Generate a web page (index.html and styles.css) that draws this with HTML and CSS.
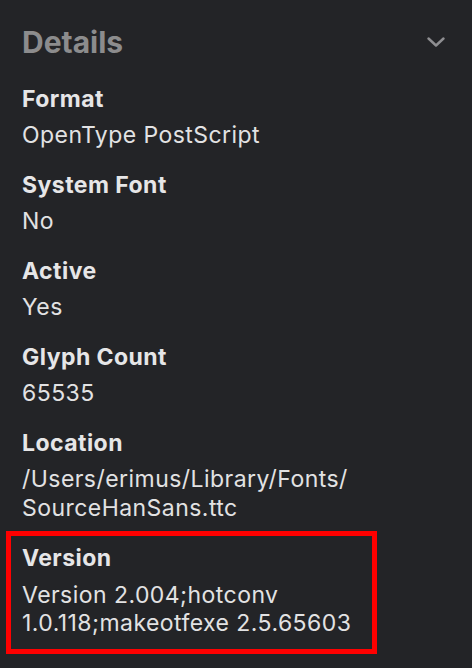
FILE: index.html
```html
<!DOCTYPE html>
<html lang="en">
<head>
<meta charset="utf-8">
<title>Details</title>
<link rel="stylesheet" href="styles.css">
</head>
<body>
<section class="panel">
  <header class="panel-header">
    <h2 class="panel-title">Details</h2>
    <svg class="chevron" width="18" height="10" viewBox="0 0 18 10" aria-hidden="true">
      <polyline points="1.5,1.5 9,8.5 16.5,1.5" fill="none" stroke="#8e8e91" stroke-width="2.4" stroke-linecap="round" stroke-linejoin="round"/>
    </svg>
  </header>
  <dl class="details">
    <div class="item">
      <dt class="label">Format</dt>
      <dd class="value">OpenType PostScript</dd>
    </div>
    <div class="item">
      <dt class="label">System Font</dt>
      <dd class="value">No</dd>
    </div>
    <div class="item">
      <dt class="label">Active</dt>
      <dd class="value">Yes</dd>
    </div>
    <div class="item">
      <dt class="label">Glyph Count</dt>
      <dd class="value">65535</dd>
    </div>
    <div class="item">
      <dt class="label">Location</dt>
      <dd class="value">/Users/erimus/Library/Fonts/<br>SourceHanSans.ttc</dd>
    </div>
    <div class="item item-highlight">
      <dt class="label">Version</dt>
      <dd class="value">Version 2.004;hotconv<br>1.0.118;makeotfexe 2.5.65603</dd>
    </div>
  </dl>
</section>
</body>
</html>
```

FILE: styles.css
```css
html, body {
  margin: 0;
  padding: 0;
  background: #232427;
}

body {
  width: 472px;
  height: 668px;
  overflow: hidden;
  font-family: Inter, "Liberation Sans", sans-serif;
  color: #e4e4e5;
}

.panel {
  padding: 24px 27px 0 0;
}

.panel-header {
  display: flex;
  align-items: center;
  justify-content: space-between;
  height: 36px;
  padding-left: 22px;
}

.panel-title {
  margin: 0;
  font-size: 30px;
  line-height: 36px;
  font-weight: 700;
  color: #8c8c8d;
}

.chevron {
  display: block;
}

.details {
  margin: 25px 0 0 0;
  padding: 0;
}

.item {
  margin: 0 0 21.2px 0;
  padding-left: 22px;
}

.label {
  font-size: 23px;
  line-height: 28.4px;
  font-weight: 700;
  letter-spacing: 0.45px;
  color: #e6e6e7;
}

.value {
  margin: 8px 0 0 0;
  font-size: 23px;
  line-height: 28.4px;
  font-weight: 400;
  letter-spacing: 0.45px;
  color: #e2e2e3;
}

.item-highlight {
  margin: -12px 0 0 6px;
  width: 371px;
  box-sizing: border-box;
  border: 5px solid #ff0000;
  padding: 8px 0 11px 11px;
}
```
